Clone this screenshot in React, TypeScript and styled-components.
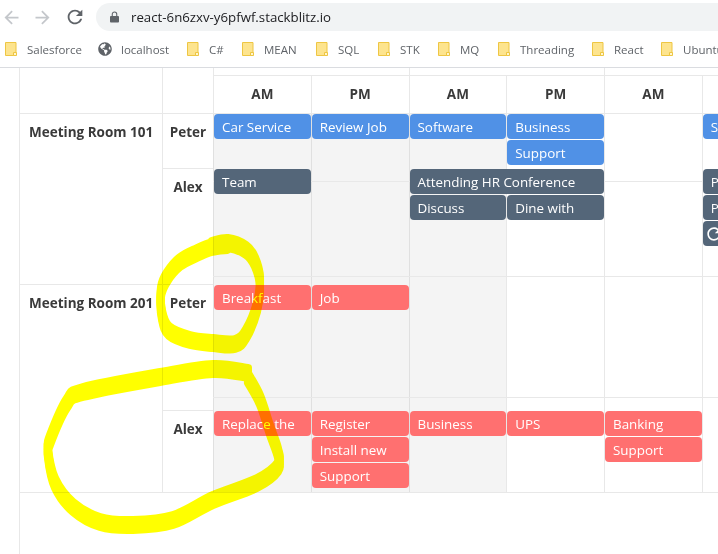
import React from "react";
import styled, { createGlobalStyle } from "styled-components";
import { FaGlobeAmericas } from "react-icons/fa";

const Global = createGlobalStyle`
  html, body { margin: 0; padding: 0; height: 100%; background: #fff; }
  #root { height: 100%; }
  * { box-sizing: border-box; }
`;

const COL = 97.75;
const FONT = `"Open Sans", "Noto Sans", sans-serif`;

const Frame = styled.div`
  position: relative;
  width: 718px;
  height: 554px;
  overflow: hidden;
  display: flex;
  flex-direction: column;
  background: #fff;
  font-family: ${FONT};
`;

const Toolbar = styled.div`
  height: 34px;
  flex: none;
  display: flex;
  align-items: center;
  padding: 0 0 0 1px;
`;
const NavIcon = styled.svg<{ $size: number; $gap: number }>`
  width: ${(p) => p.$size}px;
  height: ${(p) => p.$size}px;
  margin-right: ${(p) => p.$gap}px;
  flex: none;
`;
const Address = styled.div`
  flex: 1;
  height: 28px;
  border-radius: 14px 0 0 14px;
  background: #f1f3f4;
  display: flex;
  align-items: center;
  padding-left: 14px;
  gap: 12px;
  font-size: 13.25px;
  color: #202124;
`;
const Bookmarks = styled.div`
  height: 34px;
  flex: none;
  display: flex;
  align-items: center;
  gap: 18px;
  padding: 0 0 3px 5px;
  border-bottom: 1px solid #dadce0;
  white-space: nowrap;
  overflow: hidden;
`;
const Bookmark = styled.div<{ $gap: number; $w: number }>`
  display: flex;
  align-items: center;
  gap: ${(p) => p.$gap}px;
  width: ${(p) => p.$w}px;
  font-size: 11.5px;
  color: #5f6368;
  flex: none;
  svg {
    flex: none;
  }
`;

const Page = styled.div`
  flex: 1;
  margin-left: 19px;
  border-left: 1px solid #e8e8e8;
  display: flex;
  min-height: 0;
`;

const Left = styled.div`
  width: 193px;
  flex: none;
`;
const LeftHead = styled.div`
  height: 46px;
  border-bottom: 1px solid #e8e8e8;
  display: flex;
`;
const BlankHead = styled.div<{ $w: number }>`
  width: ${(p) => p.$w}px;
  border-right: ${(p) => (p.$w > 100 ? "1px solid #e8e8e8" : "none")};
`;
const RoomBlock = styled.div<{ $h: number }>`
  height: ${(p) => p.$h}px;
  display: flex;
  border-bottom: 1px solid #e8e8e8;
`;
const RoomName = styled.div`
  width: 143px;
  flex: none;
  border-right: 1px solid #e8e8e8;
  padding: 8px 0 0 9px;
  font-size: 13.5px;
  line-height: 20px;
  font-weight: 700;
  color: #3a3a3a;
  white-space: nowrap;
`;
const People = styled.div`
  flex: 1;
  display: flex;
  flex-direction: column;
`;
const Person = styled.div<{ $h: number; $last?: boolean }>`
  height: ${(p) => p.$h}px;
  flex: none;
  padding-top: 8px;
  text-align: center;
  font-size: 13.5px;
  line-height: 20px;
  font-weight: 700;
  color: #3a3a3a;
  border-bottom: ${(p) => (p.$last ? "none" : "1px solid #e8e8e8")};
`;

const Timeline = styled.div`
  position: relative;
  flex: 1;
  min-width: 0;
  overflow: hidden;
`;
const Track = styled.div`
  display: grid;
  grid-template-columns: repeat(6, ${COL}px);
  width: ${COL * 6}px;
`;
const DateStrip = styled(Track)`
  height: 8px;
  grid-template-columns: repeat(3, ${COL * 2}px);
  border-bottom: 1px solid #e8e8e8;
  width: 505px;
`;
const DateCell = styled.div`
  border-left: 1px solid #e8e8e8;
`;
const HeadRow = styled(Track)`
  height: 38px;
  border-bottom: 1px solid #e8e8e8;
  width: 505px;
`;
const HeadCell = styled.div`
  border-left: 1px solid #e8e8e8;
  text-align: center;
  font-size: 13.5px;
  line-height: 37px;
  font-weight: 700;
  color: #3a3a3a;
`;
const GridRow = styled(Track)<{ $h: number }>`
  height: ${(p) => p.$h}px;
  width: 505px;
  border-bottom: 1px solid #e8e8e8;
`;
const GridCell = styled.div<{ $off: boolean }>`
  border-left: 1px solid ${(p) => (p.$off ? "#e0e0e0" : "#e8e8e8")};
  background: ${(p) => (p.$off ? "#f4f4f4" : "#fff")};
`;

const EventLayer = styled.div`
  position: absolute;
  top: 46px;
  left: 0;
  display: flex;
  flex-direction: column;
`;
const Lane = styled(Track)<{ $h: number }>`
  height: ${(p) => p.$h}px;
  grid-auto-rows: 26px;
  align-content: start;
`;
const COLORS = { blue: "#5091e6", slate: "#546679", red: "#ff7070" };
const Event = styled.div<{
  $c: keyof typeof COLORS;
  $col: number;
  $row: number;
  $span: number;
}>`
  grid-column: ${(p) => p.$col} / span ${(p) => p.$span};
  grid-row: ${(p) => p.$row};
  height: 25px;
  margin-left: 1px;
  padding: 2px 8px 0;
  border-radius: 4px;
  background: ${(p) => COLORS[p.$c]};
  color: #fff;
  font-size: 13.4px;
  line-height: 23px;
  white-space: nowrap;
  overflow: hidden;
  display: flex;
  align-items: center;
`;
const SpinIcon = styled.svg`
  width: 20px;
  height: 20px;
  margin: -2px 0 0 -7px;
  flex: none;
  fill: #fff;
`;

const Scribble = styled.svg`
  position: absolute;
  left: 0;
  top: 0;
  width: 718px;
  height: 554px;
  pointer-events: none;
  mix-blend-mode: multiply;
  z-index: 5;
`;

const RELOAD =
  "M17.65 6.35C16.2 4.9 14.21 4 12 4c-4.42 0-7.99 3.58-7.99 8s3.57 8 7.99 8c3.73 0 6.84-2.55 7.73-6h-2.08c-.82 2.33-3.04 4-5.65 4-3.31 0-6-2.69-6-6s2.69-6 6-6c1.66 0 3.14.69 4.22 1.78L13 11h7V4l-2.35 2.35z";

const Folder = () => (
  <svg width="12" height="14" viewBox="0 0 12 14">
    <path d="M.5.5h10.5v13H.5z" fill="#fde48e" stroke="#eec643" />
    <path d="M8.5 10.5h3v3h-3z" fill="#fff6cf" stroke="#eec643" />
  </svg>
);

const marks: [string, number][] = [
  ["Salesforce", 75],
  ["localhost", 71],
  ["C#", 37],
  ["MEAN", 56],
  ["SQL", 44],
  ["STK", 42],
  ["MQ", 42],
  ["Threading", 76],
  ["React", 51],
  ["Ubuntu", 70],
];

type Ev = { t?: string; c: keyof typeof COLORS; col: number; row?: number; span?: number; spin?: boolean };

const lanes: { h: number; events: Ev[] }[] = [
  {
    h: 55,
    events: [
      { t: "Car Service", c: "blue", col: 1 },
      { t: "Review Job", c: "blue", col: 2 },
      { t: "Software", c: "blue", col: 3 },
      { t: "Business", c: "blue", col: 4 },
      { t: "Support", c: "blue", col: 4, row: 2 },
      { t: "Sales", c: "blue", col: 6 },
    ],
  },
  {
    h: 116,
    events: [
      { t: "Team", c: "slate", col: 1 },
      { t: "Attending HR Conference", c: "slate", col: 3, span: 2 },
      { t: "Discuss", c: "slate", col: 3, row: 2 },
      { t: "Dine with", c: "slate", col: 4, row: 2 },
      { t: "Planning", c: "slate", col: 6 },
      { t: "Payroll", c: "slate", col: 6, row: 2 },
      { c: "slate", col: 6, row: 3, spin: true },
    ],
  },
  {
    h: 126,
    events: [
      { t: "Breakfast", c: "red", col: 1 },
      { t: "Job", c: "red", col: 2 },
    ],
  },
  {
    h: 82,
    events: [
      { t: "Replace the", c: "red", col: 1 },
      { t: "Register", c: "red", col: 2 },
      { t: "Install new", c: "red", col: 2, row: 2 },
      { t: "Support", c: "red", col: 2, row: 3 },
      { t: "Business", c: "red", col: 3 },
      { t: "UPS", c: "red", col: 4 },
      { t: "Banking", c: "red", col: 5 },
      { t: "Support", c: "red", col: 5, row: 2 },
    ],
  },
];

const loopA: number[][] = [
  [227, 245], [212, 247], [197, 253], [180, 262], [167, 277], [161, 292], [162, 315], [169, 331],
  [190, 340], [213, 343], [235, 344], [246, 334], [257, 307], [260, 282], [255, 262], [246, 250],
  [228, 243], [212, 246],
];
const loopB: number[][] = [
  [248, 373], [213, 369], [160, 377], [83, 392], [67, 403], [50, 440], [48, 453], [55, 483], [73, 507],
  [100, 522], [133, 525], [173, 520], [213, 500], [257, 483], [278, 467], [278, 453], [270, 430],
  [260, 400], [248, 378],
];

// Catmull-Rom to Bezier, so the hand-drawn marker loops stay smooth.
const smooth = (pts: number[][]) => {
  let d = `M${pts[0][0]} ${pts[0][1]}`;
  for (let i = 0; i < pts.length - 1; i++) {
    const p0 = pts[i - 1] ?? pts[i];
    const p1 = pts[i];
    const p2 = pts[i + 1];
    const p3 = pts[i + 2] ?? p2;
    d += `C${p1[0] + (p2[0] - p0[0]) / 6} ${p1[1] + (p2[1] - p0[1]) / 6} ${p2[0] - (p3[0] - p1[0]) / 6} ${
      p2[1] - (p3[1] - p1[1]) / 6
    } ${p2[0]} ${p2[1]}`;
  }
  return d;
};

export default function App() {
  return (
    <Frame>
      <Global />
      <Toolbar>
        <NavIcon $size={21} $gap={10} viewBox="0 0 24 24" fill="#c4c7cb">
          <path d="M20 11H7.83l5.59-5.59L12 4l-8 8 8 8 1.41-1.41L7.83 13H20v-2z" />
        </NavIcon>
        <NavIcon $size={21} $gap={11} viewBox="0 0 24 24" fill="#c4c7cb">
          <path d="M12 4l-1.41 1.41L16.17 11H4v2h12.17l-5.58 5.59L12 20l8-8z" />
        </NavIcon>
        <NavIcon $size={22} $gap={10} viewBox="0 0 24 24" fill="#5f6368">
          <path d={RELOAD} />
        </NavIcon>
        <Address>
          <svg width="9" height="12" viewBox="0 0 10 12" fill="#5f6368">
            <path d="M1 5h8a1 1 0 0 1 1 1v5a1 1 0 0 1-1 1H1a1 1 0 0 1-1-1V6a1 1 0 0 1 1-1z" />
            <path d="M2.5 5V3a2.5 2.5 0 0 1 5 0v2" fill="none" stroke="#5f6368" strokeWidth="1.2" />
          </svg>
          react-6n6zxv-y6pfwf.stackblitz.io
        </Address>
      </Toolbar>
      <Bookmarks>
        {marks.map(([m, w]) => (
          <Bookmark key={m} $w={w} $gap={m === "localhost" ? 9 : 10}>
            {m === "localhost" ? <FaGlobeAmericas size={14} color="#5f6368" /> : <Folder />}
            {m}
          </Bookmark>
        ))}
      </Bookmarks>
      <Page>
        <Left>
          <LeftHead>
            <BlankHead $w={143} />
            <BlankHead $w={50} />
          </LeftHead>
          <RoomBlock $h={171}>
            <RoomName>Meeting Room 101</RoomName>
            <People>
              <Person $h={55}>Peter</Person>
              <Person $h={115} $last>Alex</Person>
            </People>
          </RoomBlock>
          <RoomBlock $h={208}>
            <RoomName>Meeting Room 201</RoomName>
            <People>
              <Person $h={126}>Peter</Person>
              <Person $h={81} $last>Alex</Person>
            </People>
          </RoomBlock>
        </Left>
        <Timeline>
          <DateStrip>
            <DateCell />
            <DateCell />
            <DateCell />
          </DateStrip>
          <HeadRow>
            {["AM", "PM", "AM", "PM", "AM", ""].map((h, i) => (
              <HeadCell key={i}>{h}</HeadCell>
            ))}
          </HeadRow>
          {[68, 95, 121, 95].map((h, r) => (
            <GridRow key={r} $h={h}>
              {[0, 1, 2, 3, 4, 5].map((i) => (
                <GridCell key={i} $off={i < 3} />
              ))}
            </GridRow>
          ))}
          <EventLayer>
            {lanes.map((l, i) => (
              <Lane key={i} $h={l.h}>
                {l.events.map((e, j) => (
                  <Event key={j} $c={e.c} $col={e.col} $row={e.row ?? 1} $span={e.span ?? 1}>
                    {e.spin ? (
                      <SpinIcon viewBox="0 0 24 24">
                        <path d={RELOAD} />
                      </SpinIcon>
                    ) : (
                      e.t
                    )}
                  </Event>
                ))}
              </Lane>
            ))}
          </EventLayer>
        </Timeline>
      </Page>
      <Scribble viewBox="0 0 718 554" fill="none" stroke="#ffff00" strokeWidth="8" strokeLinejoin="round" strokeLinecap="round">
        {[-5, -2.5, 0, 2.5, 5].map((dy) => (
          <g key={dy} transform={`translate(0 ${dy})`}>
            <path d={smooth(loopA)} />
            <path d={smooth(loopB)} />
          </g>
        ))}
      </Scribble>
    </Frame>
  );
}
